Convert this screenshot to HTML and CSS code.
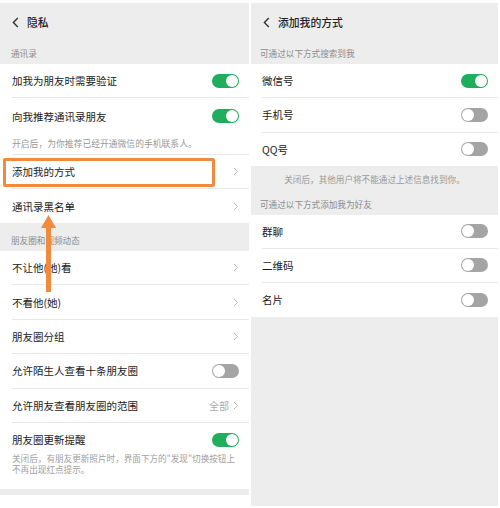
FILE: index.html
```html
<!DOCTYPE html>
<html lang="zh-CN">
<head>
<meta charset="utf-8">
<title>隐私 / 添加我的方式</title>
<link rel="stylesheet" href="styles.css">
</head>
<body>
<div class="screen">
  <section class="panel panel-left">
    <div class="topbar">
      <svg class="back" width="7" height="11" viewBox="0 0 7 11"><path d="M5.8 1L1.4 5.5 5.8 10" fill="none" stroke="#333" stroke-width="1.4"/></svg>
      <span>隐私</span>
    </div>
    <div class="section-label">通讯录</div>
    <div class="group">
      <div class="row"><span>加我为朋友时需要验证</span><span class="switch on"></span></div>
      <div class="row row-tall">
        <div class="row-head"><span>向我推荐通讯录朋友</span><span class="switch on"></span></div>
        <div class="sub">开启后，为你推荐已经开通微信的手机联系人。</div>
      </div>
      <div class="row"><span>添加我的方式</span><svg class="chev" width="6" height="9" viewBox="0 0 6 9"><path d="M1 1l3.6 3.5L1 8" fill="none" stroke="#b8b8b8" stroke-width="1"/></svg></div>
      <div class="row"><span>通讯录黑名单</span><svg class="chev" width="6" height="9" viewBox="0 0 6 9"><path d="M1 1l3.6 3.5L1 8" fill="none" stroke="#b8b8b8" stroke-width="1"/></svg></div>
    </div>
    <div class="section-label">朋友圈和视频动态</div>
    <div class="group group-moments">
      <div class="row"><span>不让他(她)看</span><svg class="chev" width="6" height="9" viewBox="0 0 6 9"><path d="M1 1l3.6 3.5L1 8" fill="none" stroke="#b8b8b8" stroke-width="1"/></svg></div>
      <div class="row"><span>不看他(她)</span><svg class="chev" width="6" height="9" viewBox="0 0 6 9"><path d="M1 1l3.6 3.5L1 8" fill="none" stroke="#b8b8b8" stroke-width="1"/></svg></div>
      <div class="row"><span>朋友圈分组</span><svg class="chev" width="6" height="9" viewBox="0 0 6 9"><path d="M1 1l3.6 3.5L1 8" fill="none" stroke="#b8b8b8" stroke-width="1"/></svg></div>
      <div class="row"><span>允许陌生人查看十条朋友圈</span><span class="switch"></span></div>
      <div class="row"><span>允许朋友查看朋友圈的范围</span><span class="value">全部<svg class="chev" width="6" height="9" viewBox="0 0 6 9"><path d="M1 1l3.6 3.5L1 8" fill="none" stroke="#b8b8b8" stroke-width="1"/></svg></span></div>
      <div class="row row-tall row-last">
        <div class="row-head"><span>朋友圈更新提醒</span><span class="switch on"></span></div>
        <div class="sub sub-multi">关闭后，有朋友更新照片时，界面下方的"发现"切换按钮上<br>不再出现红点提示。</div>
      </div>
    </div>
    <div class="tail"></div>

    <div class="highlight"></div>
    <svg class="pointer" width="17" height="77" viewBox="0 0 17 77">
      <polygon points="8.5,0 1,13 16,13" fill="#f08a3c"/>
      <rect x="6" y="12" width="5" height="65" fill="#f08a3c"/>
    </svg>
  </section>

  <section class="panel panel-right">
    <div class="topbar">
      <svg class="back" width="7" height="11" viewBox="0 0 7 11"><path d="M5.8 1L1.4 5.5 5.8 10" fill="none" stroke="#333" stroke-width="1.4"/></svg>
      <span>添加我的方式</span>
    </div>
    <div class="section-label">可通过以下方式搜索到我</div>
    <div class="group group-search">
      <div class="row"><span>微信号</span><span class="switch on"></span></div>
      <div class="row"><span>手机号</span><span class="switch"></span></div>
      <div class="row"><span>QQ号</span><span class="switch"></span></div>
    </div>
    <div class="note">关闭后，其他用户将不能通过上述信息找到你。</div>
    <div class="section-label">可通过以下方式添加我为好友</div>
    <div class="group">
      <div class="row"><span>群聊</span><span class="switch"></span></div>
      <div class="row"><span>二维码</span><span class="switch"></span></div>
      <div class="row"><span>名片</span><span class="switch"></span></div>
    </div>
  </section>
</div>
</body>
</html>
```
FILE: styles.css
```css
html, body {
  margin: 0;
  padding: 0;
}

body {
  width: 500px;
  height: 508px;
  background: #fff;
  font-family: "Noto Sans CJK SC", "Noto Sans", sans-serif;
  color: #1a1a1a;
  overflow: hidden;
}

.screen {
  display: flex;
  gap: 2px;
  padding-top: 3px;
}

.panel {
  position: relative;
  background: #ededed;
  height: 503px;
  display: flex;
  flex-direction: column;
}

.panel-left {
  width: 249px;
}

.panel-right {
  width: 247px;
}

.topbar {
  height: 33px;
  box-sizing: border-box;
  padding: 5px 0 0 12px;
  display: flex;
  align-items: center;
  gap: 8px;
  font-size: 10.8px;
  font-weight: 500;
  color: #222;
  flex: none;
}

.section-label {
  height: 28px;
  box-sizing: border-box;
  padding: 11px 0 0 11px;
  font-size: 8.6px;
  line-height: 12px;
  color: #8c8c8c;
  flex: none;
}

.panel-right .section-label {
  padding-left: 9px;
}

.group {
  background: #fff;
  flex: none;
}

.row {
  height: 33px;
  margin-left: 12px;
  padding-right: 10px;
  display: flex;
  align-items: center;
  justify-content: space-between;
  border-bottom: 1px solid #e8e8e8;
  font-size: 10.5px;
}

.panel-right .row {
  margin-left: 11px;
}

.row:last-child {
  border-bottom: none;
  height: 34px;
}

.group-moments .row {
  height: 33.4px;
}

.group-search .row {
  height: 33.3px;
}

.row-tall,
.row-tall:last-child,
.group-moments .row-tall {
  height: auto;
  display: block;
  padding: 10px 10px 4px 0;
}

.row-head {
  height: 16px;
  display: flex;
  align-items: center;
  justify-content: space-between;
}

.sub {
  margin-top: 14px;
  font-size: 8.8px;
  line-height: 12px;
  color: #9a9a9a;
  white-space: nowrap;
}

.group-moments .row-last {
  padding: 9px 10px 14px 0;
}

.sub-multi {
  margin-top: 5px;
  line-height: 11px;
  font-size: 8.6px;
  color: #a0a0a0;
}

.switch {
  position: relative;
  flex: none;
  width: 27px;
  height: 14px;
  border-radius: 7px;
  background: #a4a4a4;
}

.switch::after {
  content: "";
  position: absolute;
  top: 1px;
  left: 1px;
  width: 12px;
  height: 12px;
  border-radius: 50%;
  background: #fff;
}

.switch.on {
  background: #1fae5b;
}

.switch.on::after {
  left: 14px;
}

.chev {
  flex: none;
  display: block;
}

.value {
  display: flex;
  align-items: center;
  gap: 4px;
  color: #aaa;
  font-size: 10px;
}

.tail {
  margin-top: 6px;
  flex: 1;
  background: #fff;
}

.note {
  height: 21px;
  box-sizing: border-box;
  padding-top: 7px;
  line-height: 12px;
  text-align: center;
  font-size: 8.6px;
  color: #999;
  flex: none;
}

.highlight {
  position: absolute;
  left: 3px;
  top: 155px;
  width: 212px;
  height: 29px;
  box-sizing: border-box;
  border: 3px solid #f08a3c;
  border-radius: 2px;
}

.pointer {
  position: absolute;
  left: 40px;
  top: 212px;
}
```
